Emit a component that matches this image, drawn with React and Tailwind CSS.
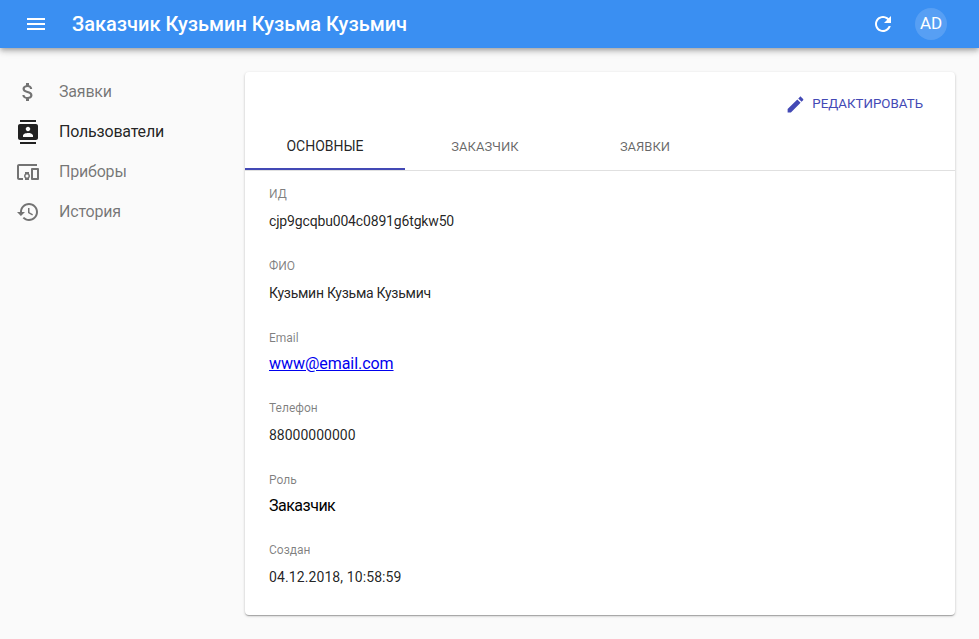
const MENU = 'M3 18h18v-2H3v2zm0-5h18v-2H3v2zm0-7v2h18V6H3z';
const REFRESH = 'M17.65 6.35C16.2 4.9 14.21 4 12 4c-4.42 0-7.99 3.58-7.99 8s3.57 8 7.99 8c3.73 0 6.84-2.55 7.73-6h-2.08c-.82 2.33-3.04 4-5.65 4-3.31 0-6-2.69-6-6s2.69-6 6-6c1.66 0 3.14.69 4.22 1.78L13 11h7V4l-2.35 2.35z';
const EDIT = 'M3 17.25V21h3.75L17.81 9.94l-3.75-3.75L3 17.25zM20.71 7.04c.39-.39.39-1.02 0-1.41l-2.34-2.34c-.39-.39-1.02-.39-1.41 0l-1.83 1.83 3.75 3.75 1.83-1.83z';

const NAV = [
  {
    label: 'Заявки',
    d: 'M11.8 10.9c-2.27-.59-3-1.2-3-2.15 0-1.09 1.01-1.85 2.7-1.85 1.78 0 2.44.85 2.5 2.1h2.21c-.07-1.72-1.12-3.3-3.21-3.81V3h-3v2.16c-1.94.42-3.5 1.68-3.5 3.61 0 2.31 1.91 3.46 4.7 4.13 2.5.6 3 1.48 3 2.41 0 .69-.49 1.79-2.7 1.79-2.06 0-2.87-.92-2.98-2.1h-2.2c.12 2.19 1.76 3.42 3.68 3.83V21h3v-2.15c1.95-.37 3.5-1.5 3.5-3.55 0-2.84-2.43-3.81-4.7-4.4z',
  },
  {
    label: 'Пользователи',
    active: true,
    d: 'M20 0H4v2h16V0zM4 24h16v-2H4v2zM20 4H4c-1.1 0-2 .9-2 2v12c0 1.1.9 2 2 2h16c1.1 0 2-.9 2-2V6c0-1.1-.9-2-2-2zm-8 2.75c1.24 0 2.25 1.01 2.25 2.25s-1.01 2.25-2.25 2.25S9.75 10.24 9.75 9 10.76 6.75 12 6.75zM17 17H7v-1.5c0-1.67 3.33-2.5 5-2.5s5 .83 5 2.5V17z',
  },
  {
    label: 'Приборы',
    d: 'M3 6h18V4H3c-1.1 0-2 .9-2 2v12c0 1.1.9 2 2 2h4v-2H3V6zm10 6H9v1.78c-.61.55-1 1.33-1 2.22s.39 1.67 1 2.22V20h4v-1.78c.61-.55 1-1.34 1-2.22s-.39-1.67-1-2.22V12zm-2 5.5c-.83 0-1.5-.67-1.5-1.5s.67-1.5 1.5-1.5 1.5.67 1.5 1.5-.67 1.5-1.5 1.5zM22 8h-6c-.5 0-1 .5-1 1v10c0 .5.5 1 1 1h6c.5 0 1-.5 1-1V9c0-.5-.5-1-1-1zm-1 10h-4v-8h4v8z',
  },
  {
    label: 'История',
    d: 'M13 3c-4.97 0-9 4.03-9 9H1l3.89 3.89.07.14L9 12H6c0-3.87 3.13-7 7-7s7 3.13 7 7-3.13 7-7 7c-1.93 0-3.68-.79-4.94-2.06l-1.42 1.42C8.27 19.99 10.51 21 13 21c4.97 0 9-4.03 9-9s-4.03-9-9-9zm-1 5v5l4.28 2.54.72-1.21-3.5-2.08V8H12z',
  },
];

const TABS = ['Основные', 'Заказчик', 'Заявки'];

const Icon = ({ d, className }) => (
  <svg viewBox="0 0 24 24" fill="currentColor" className={className}>
    <path d={d} />
  </svg>
);

const Field = ({ label, children, className = 'mb-[25px]' }) => (
  <div className={className}>
    <div className="text-xs leading-[20px] text-black/50">{label}</div>
    {children}
  </div>
);

const Value = ({ children, className }) => (
  <div className={`mt-[7px] text-sm leading-[20px] text-black/87 ${className}`}>{children}</div>
);

export default function App() {
  return (
    <div className="h-[639px] overflow-hidden bg-[#fafafa] font-['Roboto',sans-serif]">
      {/* top bar */}
      <header className="relative z-10 h-12 bg-[#3a8ff2] text-white flex items-center pl-6 pr-8 shadow-[0_2px_4px_-1px_rgba(0,0,0,0.2),0_4px_5px_0_rgba(0,0,0,0.14),0_1px_10px_0_rgba(0,0,0,0.12)]">
        <Icon d={MENU} className="w-6 h-6" />
        <h1 className="ml-6 flex-1 text-xl font-medium leading-none">
          Заказчик Кузьмин Кузьма Кузьмич
        </h1>
        <Icon d={REFRESH} className="w-6 h-6" />
        <div className="ml-5 w-8 h-8 rounded-full bg-white/15 flex items-center justify-center text-[17px]">
          AD
        </div>
      </header>

      <div className="flex">
        {/* side menu */}
        <nav className="w-[245px] shrink-0 pt-6">
          {NAV.map((item) => (
            <div
              key={item.label}
              className={`h-10 pl-4 flex items-center text-base tracking-[-0.2px] ${item.active ? 'text-black/87' : 'text-black/54'}`}
            >
              <Icon d={item.d} className="w-6 h-6" />
              <span className="ml-[19px]">{item.label}</span>
            </div>
          ))}
        </nav>

        {/* card */}
        <main className="mt-6 w-[710px] h-[543px] bg-white rounded shadow-[0_1px_3px_0_rgba(0,0,0,0.2),0_1px_1px_0_rgba(0,0,0,0.14),0_2px_1px_-1px_rgba(0,0,0,0.12)]">
          <div className="h-[50px] pt-[20px] pr-8 flex justify-end">
            <div className="h-6 flex items-center text-[13.3px] text-[#4349b5]">
              <Icon d={EDIT} className="w-[21px] h-[21px] mr-[6px]" />
              РЕДАКТИРОВАТЬ
            </div>
          </div>
          <div className="h-[49px] flex border-b border-[#e0e0e0]">
            {TABS.map((tab, i) => (
              <div
                key={tab}
                className={`w-40 h-12 flex items-center justify-center uppercase ${i === 0 ? 'pt-[2px] text-sm text-black/87 border-b-2 border-[#4349b5]' : 'pt-[2px] text-[13px] text-black/60'}`}
              >
                {tab}
              </div>
            ))}
          </div>
          <div className="px-6 pt-[13px]">
            <Field label="ИД"><Value className="tracking-[-0.16px]">cjp9gcqbu004c0891g6tgkw50</Value></Field>
            <Field label="ФИО"><Value className="tracking-[-0.27px]">Кузьмин Кузьма Кузьмич</Value></Field>
            <Field label="Email" className="mb-[24px]">
              <a href="#" className="block mt-[6px] text-base leading-[20px] tracking-[-0.05px] text-[#0000ee] underline">www@email.com</a>
            </Field>
            <Field label="Телефон"><Value>88000000000</Value></Field>
            <Field label="Роль" className="mb-[24px]">
              <div className="mt-[6px] text-base leading-[20px] tracking-[-0.5px] text-black">Заказчик</div>
            </Field>
            <Field label="Создан"><Value className="tracking-[0.1px]">04.12.2018, 10:58:59</Value></Field>
          </div>
        </main>
      </div>
    </div>
  );
}
